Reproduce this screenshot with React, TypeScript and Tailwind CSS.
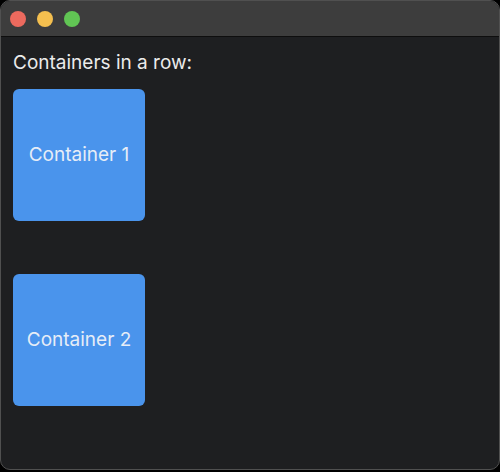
export default function App() {
  return (
    <div className="h-[472px] w-[500px] bg-black" style={{ fontFamily: "Inter, 'Noto Sans', sans-serif" }}>
      <div className="flex h-[470px] flex-col overflow-hidden rounded-[10px] border border-[#505050] bg-[#1e1f21]">
        <div className="flex h-[36px] shrink-0 items-center gap-[11px] border-b border-[#0e0e0e] bg-[#3d3d3d] pl-[9px]">
          <span className="h-4 w-4 rounded-full bg-[#ec6a5e]" />
          <span className="h-4 w-4 rounded-full bg-[#f4bf4f]" />
          <span className="h-4 w-4 rounded-full bg-[#61c554]" />
        </div>
        <div className="flex flex-col items-start pl-[12px] pt-[14px]">
          <p className="text-[19px] leading-[24px] text-[#ebebeb]">Containers in a row:</p>
          <div className="mt-[14px] flex h-[132px] w-[132px] items-center justify-center rounded-[6px] bg-[#4a94ec] text-[19px] text-[#e6edf7]">
            Container 1
          </div>
          <div className="mt-[53px] flex h-[132px] w-[132px] items-center justify-center rounded-[6px] bg-[#4a94ec] text-[19px] text-[#e6edf7]">
            Container 2
          </div>
        </div>
      </div>
    </div>
  );
}
